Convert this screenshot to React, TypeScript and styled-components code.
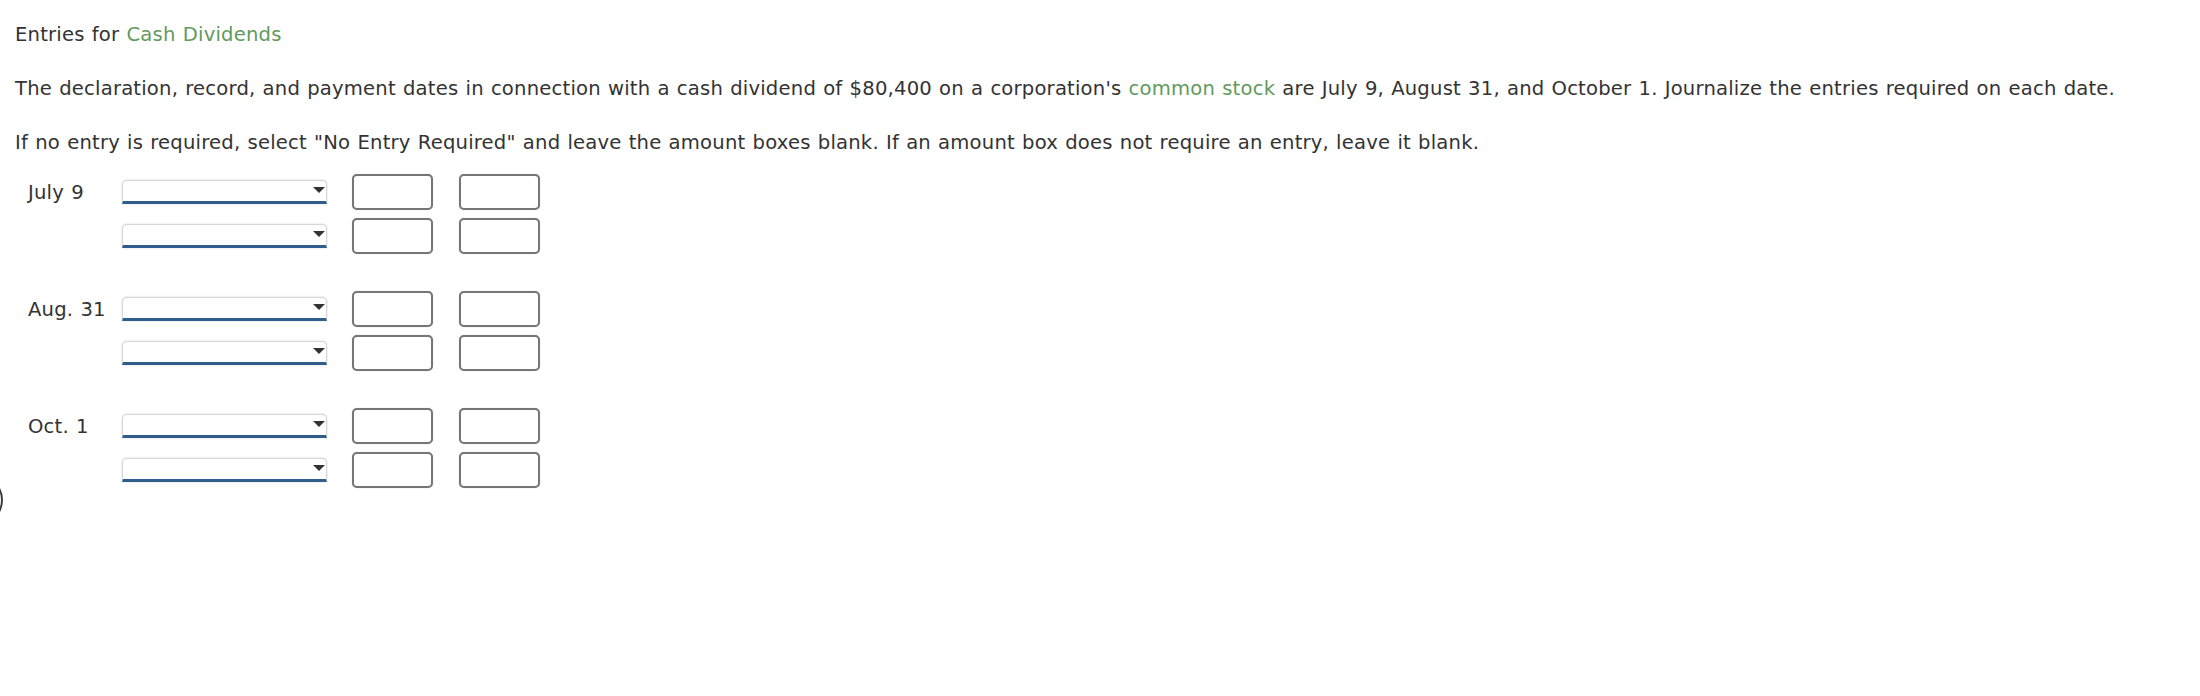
import styled, { createGlobalStyle } from "styled-components";

const GlobalStyle = createGlobalStyle`
  html, body {
    margin: 0;
    padding: 0;
    background: #fff;
  }
  body {
    font-family: "DejaVu Sans", Verdana, sans-serif;
    font-size: 19.6px;
    color: #333;
  }
`;

const Page = styled.div`
  position: relative;
  padding: 23px 15px 0 15px;
  min-height: 696px;
  box-sizing: border-box;
`;

const Text = styled.p`
  margin: 0 0 31px 0;
  line-height: 23px;
  white-space: nowrap;
  letter-spacing: 0.2px;
  word-spacing: 0.7px;
`;

const Term = styled.span`
  color: #629a5e;
`;

const Entries = styled.div`
  display: flex;
  flex-direction: column;
  margin-top: -11px;
  padding-left: 13px;
`;

const Group = styled.div`
  display: flex;
  flex-direction: column;
  gap: 8px;
  margin-bottom: 37px;
`;

const Row = styled.div`
  display: flex;
  align-items: center;
  height: 36px;
`;

const DateLabel = styled.div`
  width: 94px;
  line-height: 23px;
  white-space: nowrap;
  letter-spacing: 0.2px;
  word-spacing: 0.7px;
`;

const Select = styled.div`
  position: relative;
  width: 203px;
  height: 20px;
  background: #fff;
  border: 1px solid #d6d6d6;
  border-bottom: 3px solid #2f5e8c;
  border-radius: 5px 5px 0 0;
  box-shadow: 0 0 2px rgba(0, 0, 0, 0.18);
  margin-top: -1px;
  margin-right: 25px;

  &::after {
    content: "";
    position: absolute;
    right: 1px;
    top: 6px;
    border-left: 6px solid transparent;
    border-right: 6px solid transparent;
    border-top: 6px solid #333;
  }
`;

const Amount = styled.div`
  width: 77px;
  height: 32px;
  border: 2px solid #767676;
  border-radius: 5px;
  background: #fff;
  box-shadow: 0 0 1px rgba(0, 0, 0, 0.3);
  margin-right: 26px;
`;

const EdgeMark = styled.div`
  position: absolute;
  left: -47px;
  top: 475px;
  width: 46px;
  height: 46px;
  border: 2px solid #3a3a3a;
  border-radius: 50%;
`;

const entries = ["July 9", "Aug. 31", "Oct. 1"];

const App = () => {
  return (
    <>
      <GlobalStyle />
      <Page>
        <Text>
          Entries for <Term>Cash Dividends</Term>
        </Text>
        <Text>
          The declaration, record, and payment dates in connection with a cash
          dividend of $80,400 on a corporation's <Term>common stock</Term> are
          July 9, August 31, and October 1. Journalize the entries required on
          each date.
        </Text>
        <Text>
          If no entry is required, select "No Entry Required" and leave the
          amount boxes blank. If an amount box does not require an entry, leave
          it blank.
        </Text>
        <Entries>
          {entries.map((date) => (
            <Group key={date}>
              {[0, 1].map((line) => (
                <Row key={line}>
                  <DateLabel>{line === 0 ? date : ""}</DateLabel>
                  <Select />
                  <Amount />
                  <Amount />
                </Row>
              ))}
            </Group>
          ))}
        </Entries>
        <EdgeMark />
      </Page>
    </>
  );
};

export default App;
